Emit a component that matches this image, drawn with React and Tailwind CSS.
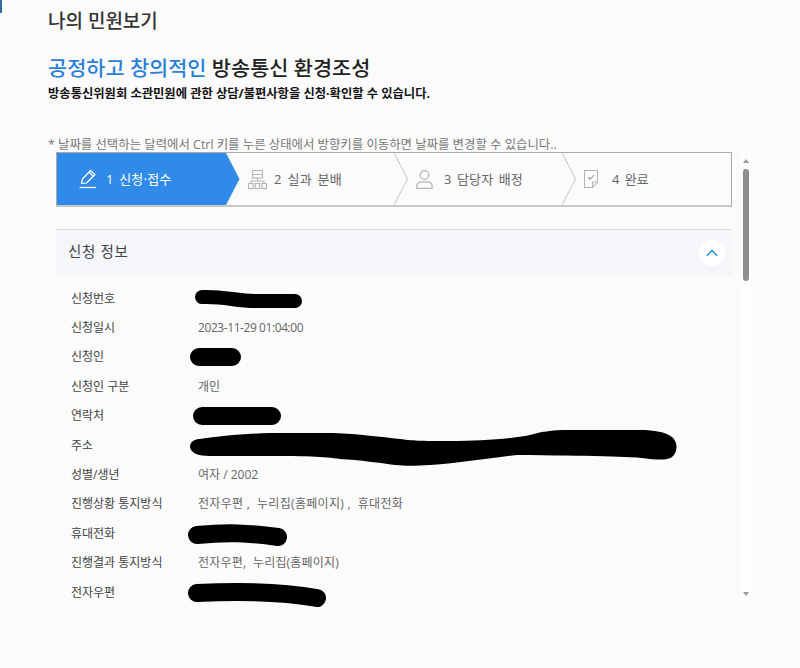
import React from 'react';

const FONT = "font-['Open_Sans','Noto_Sans_CJK_KR',sans-serif]";

const PencilIcon = () => (
  <svg width="18" height="20" viewBox="0 0 18 20" fill="none" stroke="#fff" strokeWidth="1.2">
    <path d="M2.5 14.5 L3.5 10 L11.5 1.5 L16 5.5 L7.5 14 Z" strokeLinejoin="round" />
    <path d="M10 3.2 L14.5 7.2" />
    <path d="M0.5 18.5 H17" />
  </svg>
);

const OrgIcon = () => (
  <svg width="19" height="19" viewBox="0 0 19 19" fill="none" stroke="#b4b4b4" strokeWidth="1.1">
    <rect x="4.5" y="0.5" width="10" height="7.5" />
    <path d="M4.5 4.5 H14.5 M9.5 8 V11 M3 13.5 V11 H16 V13.5" />
    <rect x="0.5" y="13.5" width="4.5" height="5" />
    <rect x="7.2" y="13.5" width="4.5" height="5" />
    <rect x="14" y="13.5" width="4.5" height="5" />
  </svg>
);

const UserIcon = () => (
  <svg width="17" height="19" viewBox="0 0 17 19" fill="none" stroke="#b4b4b4" strokeWidth="1.2">
    <circle cx="8.5" cy="5" r="4.3" />
    <path d="M0.8 18.3 V16.5 C0.8 13.5 3 11.8 5.5 11.8 H11.5 C14 11.8 16.2 13.5 16.2 16.5 V18.3 Z" strokeLinejoin="round" />
  </svg>
);

const DocIcon = () => (
  <svg width="14" height="18" viewBox="0 0 14 18" fill="none" stroke="#b4b4b4" strokeWidth="1.1">
    <path d="M0.5 0.5 H13.5 V12 L8.5 17.5 H0.5 Z" />
    <path d="M8.5 17.5 V12 H13.5" />
    <path d="M4 7 L6.2 9.2 L10 5" stroke="#999" />
  </svg>
);

const steps = [
  { label: '1 신청·접수', icon: <PencilIcon />, active: true, gap: 'gap-[9px]', w: 'w-[169px]', text: 'tracking-[0.2px] [word-spacing:2px]' },
  { label: '2 실과 분배', icon: <OrgIcon />, gap: 'gap-[7px]', w: 'w-[168px]', text: 'tracking-[0.3px] [word-spacing:2px]' },
  { label: '3 담당자 배정', icon: <UserIcon />, gap: 'gap-[11px]', w: 'w-[168px]', text: 'tracking-[0.1px] [word-spacing:2px]' },
  { label: '4 완료', icon: <DocIcon />, gap: 'gap-[14px]', w: 'flex-1', text: 'tracking-[0px] [word-spacing:2px]' },
];

const Blot = ({ width, d, height = 20, stroke = 18 }) => (
  <svg width={width} height={height} viewBox={`0 0 ${width} ${height}`} className="block" fill="none">
    <path d={d} stroke="#000" strokeWidth={stroke} strokeLinecap="round" strokeLinejoin="round" />
  </svg>
);

// 주소 가림 부분은 굵기가 일정하지 않아서 채운 도형으로 그림
const AddressBlot = () => (
  <svg width="488" height="42" viewBox="0 0 488 42" className="block" fill="#000">
    <path d="M0 21 C1 16 5 14 10 14 C30 11 50 9 80 8 L143 8 C170 9 190 12 210 14 C225 16 235 16 260 16 C290 16 320 14 340 10 C350 7 360 5 380 5 L450 5 C465 5 475 7 482 12 C488 17 488 27 482 32 C478 35 470 35 460 34 C440 31 400 31 327 30 C300 33 270 38 240 40 C225 41 215 41 205 40 C190 38 170 35 150 34 C130 31 110 31 20 31 C8 31 0 28 0 21 Z" />
  </svg>
);

const rows = [
  { label: '신청번호', value: <div className="ml-[-3px]"><Blot width={107} stroke={14} d="M7 8 C 30 7, 40 12, 60 12 L 100 12" /></div> },
  { label: '신청일시', value: <span className="tracking-[-0.42px]">2023-11-29 01:04:00</span> },
  { label: '신청인', value: <div className="ml-[-8px]"><Blot width={51} d="M9 10 H 42" /></div> },
  { label: '신청인 구분', value: '개인' },
  { label: '연락처', value: <div className="ml-[-5px]"><Blot width={88} d="M9 10 H 79" /></div> },
  { label: '주소', value: <div className="ml-[-8px]"><AddressBlot /></div> },
  { label: '성별/생년', value: '여자 / 2002' },
  { label: '진행상황 통지방식', value: <span className="tracking-[0.3px]">전자우편 ,  누리집(홈페이지) ,  휴대전화</span> },
  { label: '휴대전화', value: <div className="ml-[-10px]"><Blot width={99} height={24} d="M9 13 C 40 10, 60 11, 90 15" /></div> },
  { label: '진행결과 통지방식', value: <span className="tracking-[0.2px]">전자우편,  누리집(홈페이지)</span> },
  { label: '전자우편', value: <div className="ml-[-10px]"><Blot width={138} height={28} d="M9 14 C 50 12, 90 12, 129 19" /></div> },
];

const App = () => {
  return (
    <div className={`${FONT} relative h-[668px] w-[800px] overflow-hidden bg-[#fbfbfb] pt-[9px]`}>
      {/* 왼쪽 위 잘린 테두리 */}
      <div className="absolute left-0 top-0 h-[13px] w-[2px] bg-[#2f6f9f]" />

      <div className="pl-[48px]">
        <h1 className="text-[19px] font-medium leading-[25px] text-[#333]">나의 민원보기</h1>
        <h2 className="mt-[20px] text-[20.8px] font-medium leading-[28px] text-[#222]">
          <span className="text-[#2a80d8]">공정하고 창의적인</span> 방송통신 환경조성
        </h2>
        <p className="mt-[3px] text-[12.3px] font-bold leading-[18px] text-[#111]">
          방송통신위원회 소관민원에 관한 상담/불편사항을 신청·확인할 수 있습니다.
        </p>
        <p className="mt-[32px] h-[17px] text-[12.4px] leading-[19px] text-[#777]">
          * 날짜를 선택하는 달력에서 Ctrl 키를 누른 상태에서 방향키를 이동하면 날짜를 변경할 수 있습니다..
        </p>
      </div>

      <div className="ml-[56px] flex h-[448px] items-stretch">
        <div className="w-[676px]">
          {/* 진행 단계 */}
          <div className="flex h-[55px] border border-b-2 border-[#aaaaaa] border-b-[#c8c8c8]">
            {steps.map((s, i) => (
              <div
                key={s.label}
                className={`relative flex items-center pl-[22px] ${s.w} ${s.gap} ${s.active ? 'bg-[#2f8ae8] text-white' : 'text-[#666]'} ${i === 0 ? 'z-10' : ''}`}
              >
                {s.icon}
                <span className={`text-[13px] leading-none ${s.text}`}>{s.label}</span>
                {i < 3 && (
                  <svg width="14" height="52" viewBox="0 0 14 52" className="absolute left-full top-0" fill={s.active ? '#2f8ae8' : '#fbfbfb'}>
                    <path d="M0 0 L13.5 26 L0 52 Z" stroke="none" />
                    {!s.active && <path d="M0 0 L13.5 26 L0 52" fill="none" stroke="#c4c4c4" />}
                  </svg>
                )}
              </div>
            ))}
          </div>

          {/* 신청 정보 */}
          <div className="mt-[22px] flex h-[46px] items-center justify-between border-t border-[#d8dae2] bg-[#f5f6fa] pl-[12px] pr-[7px]">
            <span className="pb-[2px] text-[14.5px] tracking-[0.7px] text-[#444]">신청 정보</span>
            <span className="flex h-[26px] w-[26px] items-center justify-center rounded-full bg-white">
              <svg width="12" height="8" viewBox="0 0 12 8" fill="none" stroke="#1a90d8" strokeWidth="1.4">
                <path d="M0.8 6.8 L6 1.5 L11.2 6.8" />
              </svg>
            </span>
          </div>

          <dl className="mt-[9px]">
            {rows.map((r) => (
              <div key={r.label} className="flex h-[29.4px] items-center pl-[15px] text-[12px]">
                <dt className="w-[127px] shrink-0 text-[#444]">{r.label}</dt>
                <dd className="whitespace-pre text-[#666]">{r.value}</dd>
              </div>
            ))}
          </dl>
        </div>

        {/* 스크롤바 */}
        <div className="ml-[8px] flex w-[11px] flex-col items-center bg-[#fdfdfd] pt-[7px]">
          <span className="h-0 w-0 border-x-[3.5px] border-b-[4px] border-x-transparent border-b-[#999]" />
          <span className="mt-[6px] h-[112px] w-[6px] rounded-full bg-[#8e8e8e]" />
          <span className="mt-[311px] h-0 w-0 border-x-[3.5px] border-t-[4px] border-x-transparent border-t-[#999]" />
        </div>
      </div>
    </div>
  );
};

export default App;
